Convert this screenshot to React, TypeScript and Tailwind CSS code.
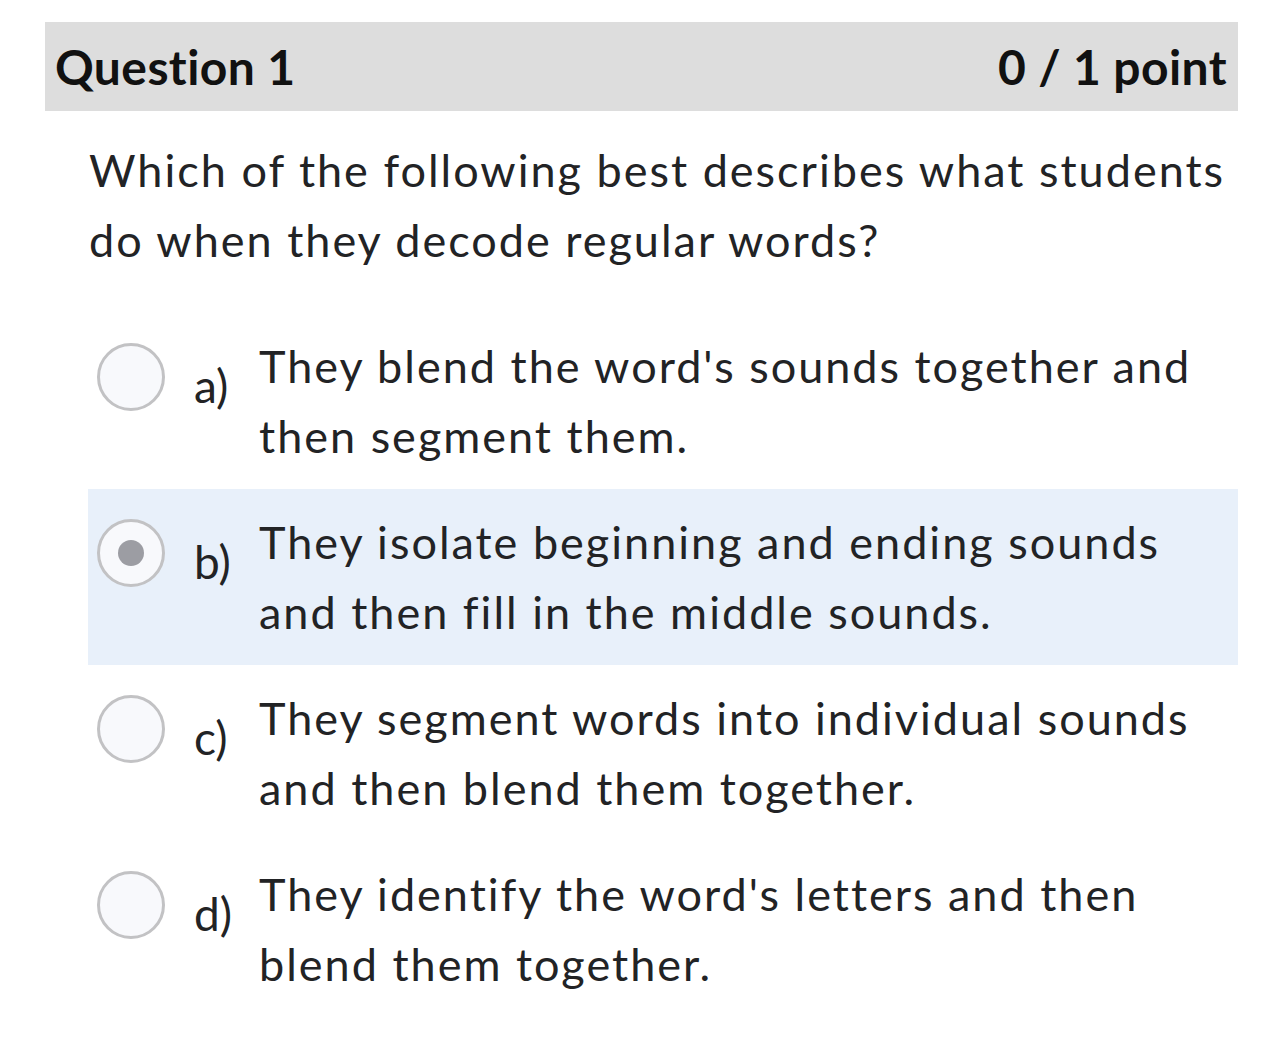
const options = [
  { key: 'a', text: "They blend the word's sounds together and then segment them.", selected: false },
  { key: 'b', text: 'They isolate beginning and ending sounds and then fill in the middle sounds.', selected: true },
  { key: 'c', text: 'They segment words into individual sounds and then blend them together.', selected: false },
  { key: 'd', text: "They identify the word's letters and then blend them together.", selected: false },
];

function Radio({ checked }: { checked: boolean }) {
  return (
    <div className="mt-[12px] flex h-[68px] w-[68px] shrink-0 items-center justify-center rounded-full border-[3px] border-[#c2c2c4] bg-[#f8f9fc]">
      {checked && <div className="h-[26px] w-[26px] rounded-full bg-[#9c9da3]" />}
    </div>
  );
}

export default function App() {
  return (
    <div className="min-h-[1050px] bg-white pt-[22px] text-[#222325]" style={{ fontFamily: 'Lato, "Noto Sans", sans-serif' }}>
      <div className="ml-[45px] w-[1193px]">
        {/* Header */}
        <div className="flex h-[89px] items-center justify-between bg-[#dddddd] pl-[10px] pr-[11px] text-[48px] font-bold tracking-[0.4px] text-[#111111]">
          <span>Question 1</span>
          <span>0 / 1 point</span>
        </div>

        {/* Question */}
        <p className="mt-[24px] pl-[44px] pr-[8px] text-[45px] leading-[70px] tracking-[2px]">
          Which of the following best describes what students do when they decode regular words?
        </p>

        {/* Options */}
        <div className="mt-[38px] ml-[43px]">
          {options.map(o => (
            <div
              key={o.key}
              className={`flex h-[176px] items-start pl-[9px] pt-[18px] ${o.selected ? 'bg-[#e8f0fa]' : ''}`}
            >
              <Radio checked={o.selected} />
              <span className="mt-[30px] w-[64px] shrink-0 pl-[29px] text-[46px] leading-[50px]">{o.key})</span>
              <span className="pl-[30px] text-[45px] leading-[70px] tracking-[2px]">{o.text}</span>
            </div>
          ))}
        </div>
      </div>
    </div>
  );
}
